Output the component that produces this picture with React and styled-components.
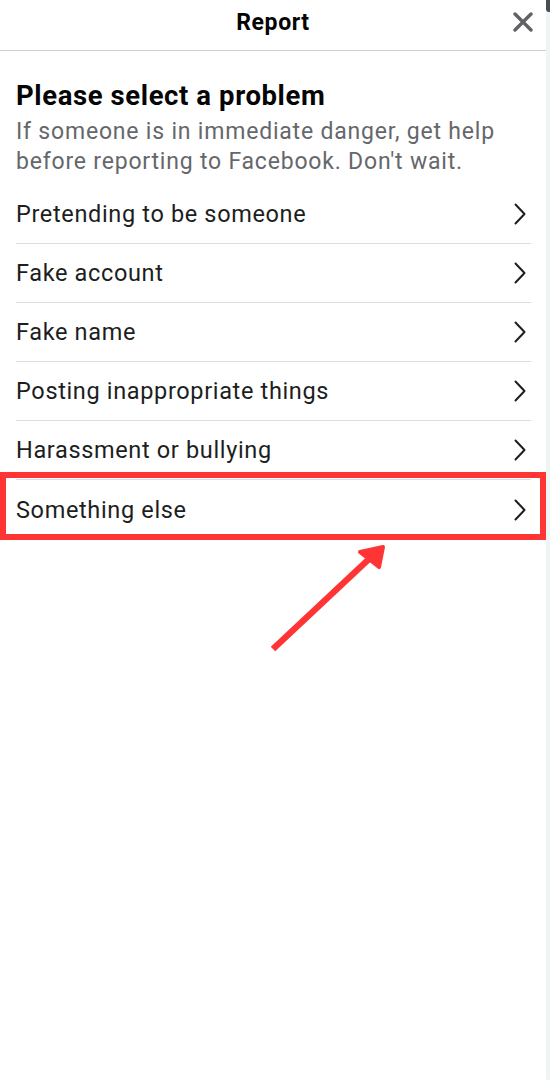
import React from "react";
import styled, { createGlobalStyle } from "styled-components";

const GlobalStyle = createGlobalStyle`
  html, body {
    margin: 0;
    padding: 0;
    background: #ffffff;
  }
  body {
    font-family: Roboto, "Liberation Sans", Arial, sans-serif;
    -webkit-font-smoothing: antialiased;
  }
  * { box-sizing: border-box; }
`;

const Screen = styled.div`
  width: 550px;
  min-height: 1080px;
  display: flex;
  background: #ffffff;
`;

const Sheet = styled.div`
  position: relative;
  flex: 1;
  min-width: 0;
`;

const EdgeStrip = styled.div`
  width: 4px;
  background: #eef5f5;
  position: relative;
  &::before {
    content: "";
    position: absolute;
    top: 0;
    left: 0;
    width: 4px;
    height: 12px;
    background: #4a4d52;
    border-bottom-left-radius: 3px;
  }
`;

const Header = styled.header`
  height: 51px;
  display: grid;
  grid-template-columns: 1fr auto 1fr;
  align-items: center;
  border-bottom: 1px solid #ccd0d5;
  padding-bottom: 6px;
`;

const HeaderTitle = styled.h1`
  grid-column: 2;
  margin: 0;
  font-size: 23px;
  font-weight: 700;
  color: #050505;
  letter-spacing: 0.6px;
`;

const CloseButton = styled.button`
  grid-column: 3;
  justify-self: end;
  margin-right: 13px;
  width: 20px;
  height: 20px;
  padding: 0;
  border: none;
  background: none;
  display: flex;
  align-items: center;
  justify-content: center;
`;

const Intro = styled.section`
  padding: 29px 16px 0;
`;

const Title = styled.h2`
  margin: 0;
  font-size: 27.5px;
  line-height: 32px;
  font-weight: 700;
  color: #050505;
  letter-spacing: 0.6px;
`;

const Subtitle = styled.p`
  margin: 5px 0 0;
  font-size: 23px;
  line-height: 29.5px;
  color: #65676b;
  letter-spacing: 0.8px;
`;

const List = styled.ul`
  list-style: none;
  margin: 9px 0 0;
  padding: 0 15px 0 16px;
`;

const Row = styled.li`
  height: 59px;
  display: flex;
  align-items: center;
  justify-content: space-between;
  padding-right: 5px;
  border-bottom: ${(p) => (p.$last ? "none" : "1px solid #dadde1")};
`;

const RowLabel = styled.span`
  font-size: 23.5px;
  color: #1c1e21;
  letter-spacing: 0.65px;
`;

const Highlight = styled.div`
  position: absolute;
  left: 0;
  top: 472px;
  width: 546px;
  height: 68px;
  border: 6px solid #ff3535;
  pointer-events: none;
`;

const ArrowMark = styled.svg`
  position: absolute;
  left: 0;
  top: 0;
  pointer-events: none;
`;

const Chevron = () => (
  <svg width="12" height="22" viewBox="0 0 12 22" fill="none">
    <path d="M1.5 1.5 L10.5 11 L1.5 20.5" stroke="#1c1e21" strokeWidth="2" strokeLinecap="round" strokeLinejoin="round" />
  </svg>
);

const CloseIcon = () => (
  <svg width="20" height="20" viewBox="0 0 20 20" fill="none">
    <path d="M2 2 L18 18 M18 2 L2 18" stroke="#606266" strokeWidth="3.4" strokeLinecap="round" />
  </svg>
);

const items = [
  "Pretending to be someone",
  "Fake account",
  "Fake name",
  "Posting inappropriate things",
  "Harassment or bullying",
  "Something else",
];

export default function App() {
  return (
    <>
      <GlobalStyle />
      <Screen>
        <Sheet>
          <Header>
            <HeaderTitle>Report</HeaderTitle>
            <CloseButton aria-label="Close">
              <CloseIcon />
            </CloseButton>
          </Header>
          <Intro>
            <Title>Please select a problem</Title>
            <Subtitle>
              If someone is in immediate danger, get help
              <br />
              before reporting to Facebook. Don't wait.
            </Subtitle>
          </Intro>
          <List>
            {items.map((label, i) => (
              <Row key={label} $last={i === items.length - 1}>
                <RowLabel>{label}</RowLabel>
                <Chevron />
              </Row>
            ))}
          </List>
          <Highlight />
          <ArrowMark width="546" height="700" viewBox="0 0 546 700">
            <line x1="273" y1="649" x2="369" y2="559" stroke="#ff3535" strokeWidth="6.5" strokeLinecap="butt" />
            <path d="M383 547 L360 552 L379 567 Z" fill="#ff3535" stroke="#ff3535" strokeWidth="4" strokeLinejoin="round" />
          </ArrowMark>
        </Sheet>
        <EdgeStrip />
      </Screen>
    </>
  );
}
